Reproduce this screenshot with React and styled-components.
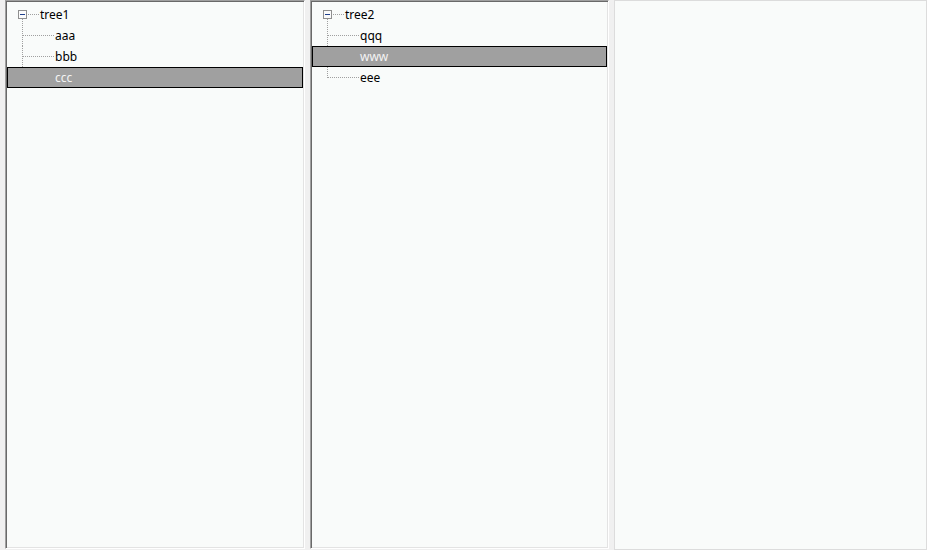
import React from 'react'
import styled, { createGlobalStyle } from 'styled-components'

const Global = createGlobalStyle`
  html, body {
    margin: 0;
    padding: 0;
    background: #f0f0f0;
  }
  body {
    font-family: "Noto Sans", "Noto Sans CJK SC", "DejaVu Sans", sans-serif;
  }
`

const Window = styled.div`
  display: flex;
  width: 927px;
  height: 550px;
  padding-left: 5px;
  box-sizing: border-box;
  background: #f0f0f0;
`

const TreePane = styled.div`
  width: ${(p) => p.$width}px;
  margin-right: ${(p) => p.$gap}px;
  height: 549px;
  box-sizing: border-box;
  background: #f9fbfa;
  border-style: solid;
  border-width: 1px;
  border-color: #a0a0a0 #ffffff #ffffff #a0a0a0;
  box-shadow: inset 1px 1px 0 #696969, inset -1px -1px 0 #e3e3e3;
  padding: 3px 1px 0 1px;
  overflow: hidden;
`

const EmptyPane = styled.div`
  flex: 1;
  height: 550px;
  box-sizing: border-box;
  background: #f9fbfa;
  border: 1px solid #dcdcdc;
`

const Row = styled.div`
  display: flex;
  align-items: center;
  height: 21px;
  box-sizing: border-box;
  font-size: 12px;
  color: ${(p) => (p.$selected ? '#f4f4f4' : '#000')};
  background: ${(p) => (p.$selected ? '#a0a0a0' : 'transparent')};
  border: 1px solid ${(p) => (p.$selected ? '#000' : 'transparent')};
  margin: 0;
`

const Guide = styled.svg`
  flex: none;
  display: block;
  margin-left: -1px;
`

const Label = styled.span`
  margin-left: -1px;
  line-height: 19px;
  white-space: nowrap;
`

const dot = { stroke: '#a0a0a0', strokeWidth: 1, strokeDasharray: '1 1', shapeRendering: 'crispEdges' }

function RootGuide() {
  return (
    <Guide width="34" height="21" viewBox="0 0 34 21">
      <line x1="15.5" y1="15" x2="15.5" y2="21" style={dot} />
      <line x1="21" y1="10.5" x2="32" y2="10.5" style={dot} />
      <rect x="11.5" y="6.5" width="8" height="8" fill="#fbfbfb" stroke="#8f8f8f" shapeRendering="crispEdges" />
      <line x1="13" y1="10.5" x2="18" y2="10.5" stroke="#1e3f8c" strokeWidth="1" shapeRendering="crispEdges" />
    </Guide>
  )
}

function ChildGuide({ last, hidden }) {
  return (
    <Guide width="49" height="21" viewBox="0 0 49 21">
      {!hidden && (
        <>
          <line x1="15.5" y1="0" x2="15.5" y2={last ? 11 : 21} style={dot} />
          <line x1="16" y1="10.5" x2="47" y2="10.5" style={dot} />
        </>
      )}
    </Guide>
  )
}

function Tree({ root, items, selected }) {
  return (
    <>
      <Row>
        <RootGuide />
        <Label>{root}</Label>
      </Row>
      {items.map((name, i) => (
        <Row key={name} $selected={name === selected}>
          <ChildGuide last={i === items.length - 1} hidden={name === selected} />
          <Label>{name}</Label>
        </Row>
      ))}
    </>
  )
}

export default function App() {
  return (
    <>
      <Global />
      <Window>
        <TreePane $width={300} $gap={5}>
          <Tree root="tree1" items={['aaa', 'bbb', 'ccc']} selected="ccc" />
        </TreePane>
        <TreePane $width={299} $gap={5}>
          <Tree root="tree2" items={['qqq', 'www', 'eee']} selected="www" />
        </TreePane>
        <EmptyPane />
      </Window>
    </>
  )
}
